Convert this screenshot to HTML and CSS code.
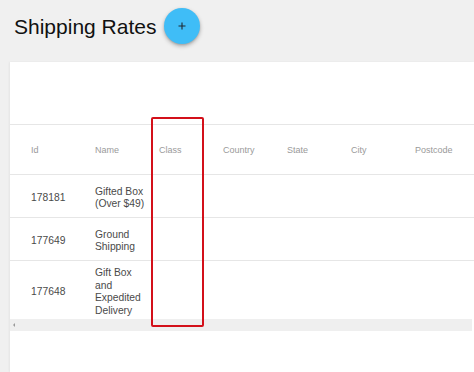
FILE: index.html
```
<!DOCTYPE html>
<html>
<head>
<meta charset="utf-8">
<link rel="stylesheet" href="styles.css">
</head>
<body>
  <header class="page-head">
    <h1 class="title">Shipping Rates</h1>
    <button class="fab" aria-label="Add">
      <svg width="8" height="8" viewBox="0 0 8 8"><path d="M4 0.5v7M0.5 4h7" stroke="#1f2a33" stroke-width="1.1" fill="none"/></svg>
    </button>
  </header>
  <main class="card">
    <div class="toolbar"></div>
    <div class="table-wrap">
      <table class="rates">
        <colgroup>
          <col class="w-id"><col class="w-col"><col class="w-col"><col class="w-col"><col class="w-col"><col class="w-col"><col class="w-last">
        </colgroup>
        <thead>
          <tr>
            <th class="c-id">Id</th>
            <th>Name</th>
            <th>Class</th>
            <th>Country</th>
            <th>State</th>
            <th>City</th>
            <th>Postcode</th>
          </tr>
        </thead>
        <tbody>
          <tr class="r-short">
            <td class="c-id">178181</td>
            <td>Gifted Box<br>(Over $49)</td>
            <td></td><td></td><td></td><td></td><td></td>
          </tr>
          <tr class="r-short">
            <td class="c-id">177649</td>
            <td>Ground<br>Shipping</td>
            <td></td><td></td><td></td><td></td><td></td>
          </tr>
          <tr class="r-tall">
            <td class="c-id">177648</td>
            <td>Gift Box<br>and<br>Expedited<br>Delivery</td>
            <td></td><td></td><td></td><td></td><td></td>
          </tr>
        </tbody>
      </table>
      <div class="hscroll"><span class="arrow"></span></div>
      <div class="highlight"></div>
    </div>
  </main>
</body>
</html>
```
FILE: styles.css
```
html, body {
  margin: 0;
  padding: 0;
  height: 100%;
}
body {
  background: #f0f0f0;
  font-family: "Liberation Sans", Arial, sans-serif;
  overflow: hidden;
}
.page-head {
  display: flex;
  align-items: center;
  height: 52px;
  padding-left: 14px;
  margin-bottom: 10px;
}
.title {
  margin: 0;
  font-size: 21px;
  font-weight: normal;
  color: #111;
  line-height: 24px;
  padding-top: 1px;
}
.fab {
  margin-left: 8px;
  width: 36px;
  height: 36px;
  border-radius: 50%;
  border: none;
  padding: 0;
  background: #3fbdf7;
  box-shadow: 0 2px 4px rgba(0,0,0,0.28), 0 1px 2px rgba(0,0,0,0.12);
  display: flex;
  align-items: center;
  justify-content: center;
}
.card {
  margin-left: 10px;
  background: #fff;
  height: 310px;
  box-shadow: -1px 0 2px rgba(0,0,0,0.05);
  overflow: hidden;
}
.toolbar {
  height: 62px;
}
.table-wrap {
  position: relative;
}
.rates {
  border-collapse: collapse;
  table-layout: fixed;
  width: 479px;
}
.w-id { width: 69px; }
.w-col { width: 64px; }
.w-last { width: 90px; }
.rates th, .rates td {
  padding: 0 0 0 16px;
  text-align: left;
  vertical-align: middle;
  border-top: 1px solid #e6e6e6;
  white-space: nowrap;
}
.rates .c-id {
  padding-left: 21px;
}
.rates th {
  height: 49px;
  font-size: 9px;
  font-weight: normal;
  color: #9a9a9a;
  border-bottom: 1px solid #e6e6e6;
}
.rates td {
  font-size: 10.3px;
  line-height: 12.5px;
  color: #4a4a4a;
}
.rates .r-short td {
  height: 38px;
  padding-top: 4px;
}
.rates .r-tall td {
  height: 50px;
  padding-top: 6px;
  padding-bottom: 2px;
}
.hscroll {
  height: 12px;
  background: #efefef;
  width: 462px;
  position: relative;
}
.arrow {
  position: absolute;
  left: 3px;
  top: 4px;
  width: 0;
  height: 0;
  border-top: 2px solid transparent;
  border-bottom: 2px solid transparent;
  border-right: 2px solid #9a9a9a;
}
.highlight {
  position: absolute;
  left: 141px;
  top: -7px;
  width: 49px;
  height: 206px;
  border: 2px solid #d3101a;
  border-radius: 2px;
}
```
